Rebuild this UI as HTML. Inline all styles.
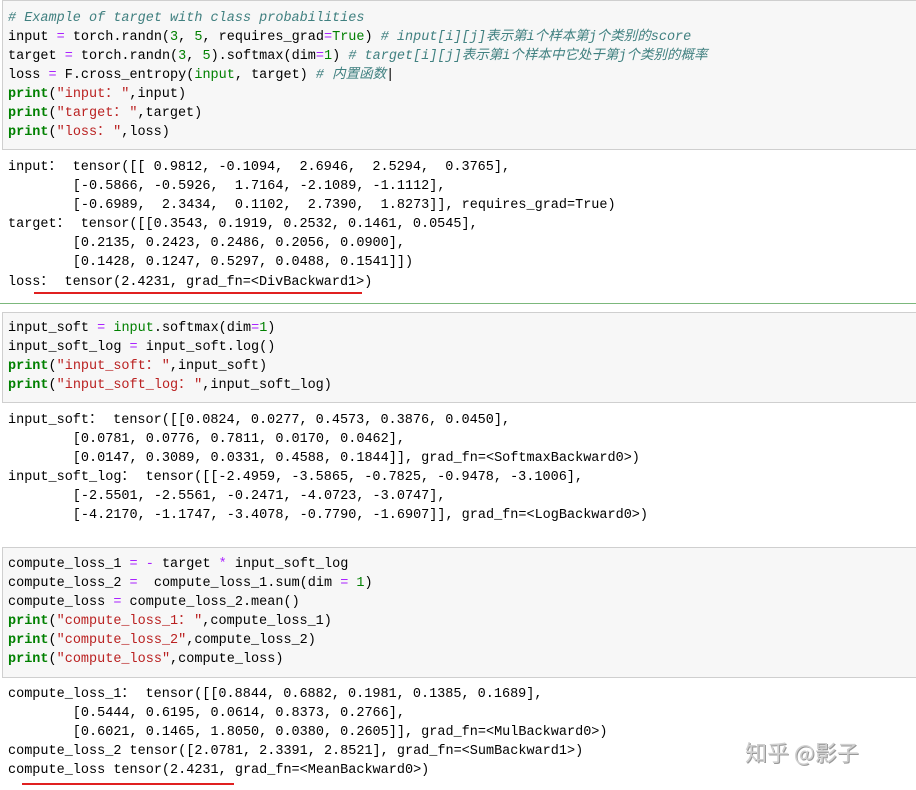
<!DOCTYPE html>
<html><head><meta charset="utf-8"><style>
body{margin:0;width:916px;height:790px;background:#fff;position:relative;overflow:hidden;font-family:"Liberation Mono","Noto Sans CJK SC",monospace;font-size:13.5px;color:#000}
pre{margin:0;font:inherit;line-height:19.1px;position:absolute;left:8px;white-space:pre}
.box{position:absolute;left:2px;right:-5px;background:#f7f7f7;border:1px solid #cfcfcf}
.k{color:#008000;font-weight:bold}.s{color:#ba2121}.c{color:#408080;font-style:italic}.o{color:#aa22ff}.n{color:#008000}.b{color:#008000}
.red{position:absolute;height:2px;background:#e02020}
i.q{font-style:normal;display:inline-block;width:16px}
.wm{position:absolute;left:745px;top:736px;font-family:"Noto Sans CJK SC",sans-serif;font-size:22px;color:#d0d0d0;text-shadow:1px 1px 0 #999}
</style></head><body>
<div class="box" style="top:0;height:148px"></div>
<pre style="top:8.5px"><span class="c"># Example of target with class probabilities</span>
input <span class="o">=</span> torch.randn(<span class="n">3</span>, <span class="n">5</span>, requires_grad<span class="o">=</span><span class="n">True</span>) <span class="c"># input[i][j]表示第i个样本第j个类别的score</span>
target <span class="o">=</span> torch.randn(<span class="n">3</span>, <span class="n">5</span>).softmax(dim<span class="o">=</span><span class="n">1</span>) <span class="c"># target[i][j]表示第i个样本中它处于第j个类别的概率</span>
loss <span class="o">=</span> F.cross_entropy(<span class="b">input</span>, target) <span class="c"># 内置函数</span>|
<span class="k">print</span>(<span class="s">"input<i class="q">：</i>"</span>,input)
<span class="k">print</span>(<span class="s">"target<i class="q">：</i>"</span>,target)
<span class="k">print</span>(<span class="s">"loss<i class="q">：</i>"</span>,loss)</pre>
<pre style="top:158px">input<i class="q">：</i> tensor([[ 0.9812, -0.1094,  2.6946,  2.5294,  0.3765],
        [-0.5866, -0.5926,  1.7164, -2.1089, -1.1112],
        [-0.6989,  2.3434,  0.1102,  2.7390,  1.8273]], requires_grad=True)
target<i class="q">：</i> tensor([[0.3543, 0.1919, 0.2532, 0.1461, 0.0545],
        [0.2135, 0.2423, 0.2486, 0.2056, 0.0900],
        [0.1428, 0.1247, 0.5297, 0.0488, 0.1541]])
loss<i class="q">：</i> tensor(2.4231, grad_fn=&lt;DivBackward1&gt;)</pre>
<div class="red" style="left:34px;width:328px;top:292px"></div>
<div style="position:absolute;left:0;right:0;top:303px;height:1px;background:#7cb87c"></div>
<div class="box" style="top:312px;height:89px"></div>
<pre style="top:318.5px">input_soft <span class="o">=</span> <span class="b">input</span>.softmax(dim<span class="o">=</span><span class="n">1</span>)
input_soft_log <span class="o">=</span> input_soft.log()
<span class="k">print</span>(<span class="s">"input_soft<i class="q">：</i>"</span>,input_soft)
<span class="k">print</span>(<span class="s">"input_soft_log<i class="q">：</i>"</span>,input_soft_log)</pre>
<pre style="top:411px">input_soft<i class="q">：</i> tensor([[0.0824, 0.0277, 0.4573, 0.3876, 0.0450],
        [0.0781, 0.0776, 0.7811, 0.0170, 0.0462],
        [0.0147, 0.3089, 0.0331, 0.4588, 0.1844]], grad_fn=&lt;SoftmaxBackward0&gt;)
input_soft_log<i class="q">：</i> tensor([[-2.4959, -3.5865, -0.7825, -0.9478, -3.1006],
        [-2.5501, -2.5561, -0.2471, -4.0723, -3.0747],
        [-4.2170, -1.1747, -3.4078, -0.7790, -1.6907]], grad_fn=&lt;LogBackward0&gt;)</pre>
<div class="box" style="top:547px;height:129px"></div>
<pre style="top:554.5px">compute_loss_1 <span class="o">=</span> <span class="o">-</span> target <span class="o">*</span> input_soft_log
compute_loss_2 <span class="o">=</span>  compute_loss_1.sum(dim <span class="o">=</span> <span class="n">1</span>)
compute_loss <span class="o">=</span> compute_loss_2.mean()
<span class="k">print</span>(<span class="s">"compute_loss_1<i class="q">：</i>"</span>,compute_loss_1)
<span class="k">print</span>(<span class="s">"compute_loss_2"</span>,compute_loss_2)
<span class="k">print</span>(<span class="s">"compute_loss"</span>,compute_loss)</pre>
<pre style="top:685px">compute_loss_1<i class="q">：</i> tensor([[0.8844, 0.6882, 0.1981, 0.1385, 0.1689],
        [0.5444, 0.6195, 0.0614, 0.8373, 0.2766],
        [0.6021, 0.1465, 1.8050, 0.0380, 0.2605]], grad_fn=&lt;MulBackward0&gt;)
compute_loss_2 tensor([2.0781, 2.3391, 2.8521], grad_fn=&lt;SumBackward1&gt;)
compute_loss tensor(2.4231, grad_fn=&lt;MeanBackward0&gt;)</pre>
<div class="red" style="left:22px;width:212px;top:783px"></div>
<div class="wm">知乎 @影子</div>
</body></html>
